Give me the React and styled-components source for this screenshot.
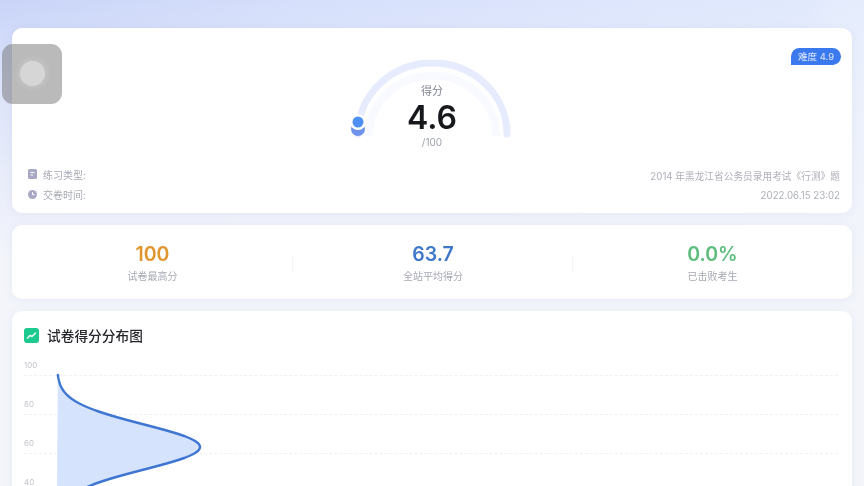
import React from "react";
import styled, { createGlobalStyle } from "styled-components";

const Global = createGlobalStyle`
  html, body { margin: 0; padding: 0; height: 486px; overflow: hidden; background: #f3f5fa; }
  #root { height: 486px; overflow: hidden; }
  * { box-sizing: border-box; }
`;

const Page = styled.div`
  position: relative;
  height: 486px;
  overflow: hidden;
  padding: 28px 12px 0;
  display: flex;
  flex-direction: column;
  gap: 12px;
  font-family: Inter, "Noto Sans CJK SC", sans-serif;
  filter: blur(0.4px);
  background:
    linear-gradient(180deg, rgba(243,245,251,0) 0, rgba(243,245,251,0.5) 100px, #f3f5fb 260px),
    linear-gradient(110deg, rgba(255,255,255,0) 78%, rgba(255,255,255,0.12) 80%, rgba(255,255,255,0.12) 100%),
    linear-gradient(100deg, #c9d4f8 0, #d5dffb 30%, #dde6fc 65%, #e3ebfd 100%);
`;

const Card = styled.section`
  background: #fff;
  border-radius: 10px;
  flex: none;
  box-shadow: 0 1px 10px rgba(110, 120, 160, 0.08);
`;

const ScoreCard = styled(Card)`
  position: relative;
  height: 185px;
  padding: 28px 12px 9px 16px;
  display: flex;
  flex-direction: column;
  justify-content: space-between;
`;

const Badge = styled.span`
  position: absolute;
  top: 20px;
  right: 11px;
  width: 50px;
  height: 17px;
  border-radius: 9px 9px 9px 0;
  background: #3b79ee;
  color: #dfe9fb;
  font-size: 9.5px;
  line-height: 18px;
  text-align: center;
`;

const Gauge = styled.div`
  position: relative;
  align-self: center;
  width: 170px;
  height: 100px;
  margin-left: -4px;
`;

const GaugeText = styled.div`
  position: absolute;
  inset: 27px 0 0 0;
  display: flex;
  flex-direction: column;
  align-items: center;
`;

const GaugeLabel = styled.span`
  font-size: 11px;
  line-height: 16px;
  color: #80838f;
`;

const GaugeValue = styled.span`
  font-size: 32px;
  line-height: 36px;
  margin-top: 1px;
  font-weight: 600;
  color: #17181c;
`;

const GaugeTotal = styled.span`
  font-size: 10px;
  line-height: 14px;
  margin-top: -1px;
  color: #a0a3ad;
`;

const Meta = styled.div`
  display: flex;
  flex-direction: column;
`;

const MetaRow = styled.div`
  height: 20px;
  display: flex;
  align-items: center;
  justify-content: space-between;
`;

const MetaLabel = styled.span`
  display: flex;
  align-items: center;
  gap: 6px;
  font-size: 10px;
  color: #a9abb5;
`;

const MetaValue = styled.span`
  margin-top: 3px;
  font-size: 9.7px;
  color: #aeb0b9;
`;

const StatsCard = styled(Card)`
  height: 74px;
  padding-top: 1px;
  display: grid;
  grid-template-columns: 281px 280px 279px;
  align-items: center;
`;

const Stat = styled.div`
  position: relative;
  display: flex;
  flex-direction: column;
  align-items: center;
  gap: 2.5px;
  ${p => p.$divider && `
    &::after {
      content: "";
      position: absolute;
      right: 0;
      top: 15px;
      height: 16px;
      width: 1px;
      background: #f4f5f7;
    }
  `}
`;

const StatValue = styled.span`
  font-size: 19.5px;
  line-height: 26px;
  font-weight: 600;
  color: ${p => p.$color};
`;

const StatLabel = styled.span`
  font-size: 10px;
  line-height: 15px;
  color: #a6a8b2;
`;

const ChartCard = styled(Card)`
  flex: 1 0 auto;
  height: 300px;
  padding: 15px 14px 0 12px;
`;

const ChartTitle = styled.h2`
  margin: 0;
  height: 18px;
  display: flex;
  align-items: center;
  gap: 8px;
  font-size: 13.7px;
  font-weight: 500;
  color: #25262b;
`;

const Plot = styled.div`
  position: relative;
  margin-top: 17px;
`;

const GridRow = styled.div`
  height: 39.1px;
  display: flex;
  flex-direction: column;
  font-size: 8px;
  line-height: 8px;
  color: #c2c4ca;
`;

const GridLine = styled.div`
  margin-top: 6px;
  border-top: 1px dashed #f0f1f4;
`;

const Curve = styled.svg`
  position: absolute;
  left: 0;
  top: 0;
  overflow: visible;
`;

const Assistive = styled.div`
  position: absolute;
  left: 2px;
  top: 44px;
  width: 60px;
  height: 60px;
  border-radius: 11px;
  background: rgba(110, 110, 110, 0.48);
  display: flex;
  align-items: center;
  justify-content: center;
`;

const AssistiveDot = styled.div`
  width: 25px;
  height: 25px;
  margin-top: -1px;
  border-radius: 50%;
  background: #d6d6d6;
  box-shadow: 0 0 4px 3px rgba(215, 215, 215, 0.3);
`;

const DocIcon = () => (
  <svg width="9" height="10" viewBox="0 0 9 10">
    <rect width="9" height="10" rx="1.5" fill="#a9a8c4" />
    <path d="M2.5 3.5h4M2.5 6h2.5" stroke="#fff" strokeWidth="1" />
  </svg>
);

const ClockIcon = () => (
  <svg width="9" height="9" viewBox="0 0 9 9">
    <circle cx="4.5" cy="4.5" r="4.5" fill="#a9a8c4" />
    <path d="M4.5 2.2v2.5h2" stroke="#fff" strokeWidth="1" fill="none" />
  </svg>
);

const TrendIcon = () => (
  <svg width="15" height="15" viewBox="0 0 15 15">
    <rect width="15" height="15" rx="3" fill="#1cc98e" />
    <path d="M3.5 10l2.5-2.5 2 1L11.5 5" stroke="#e8fbf4" strokeWidth="1.6" fill="none" strokeLinecap="round" strokeLinejoin="round" />
  </svg>
);

const stats = [
  { value: "100", label: "试卷最高分", color: "#e0952f", divider: true },
  { value: "63.7", label: "全站平均得分", color: "#3f78c9", divider: true },
  { value: "0.0%", label: "已击败考生", color: "#5dbd7c" },
];

const CURVE = Array.from({ length: 117 }, (_, y) => {
  const x = 33 + 143 * Math.exp(-((y - 72) ** 2) / (2 * 22.6 ** 2));
  return `${y === 0 ? "M" : "L"}${x.toFixed(2)} ${y}`;
}).join(" ");

export default function App() {
  return (
    <Page>
      <Global />
      <ScoreCard>
        <Badge>难度 4.9</Badge>
        <Gauge>
          <svg width="170" height="100" viewBox="0 0 170 100">
            <path d="M22 80 A63 60 0 0 1 149 80" fill="none" stroke="#f9faff" strokeWidth="8" />
            <path d="M11 78 A74.5 71 0 0 1 160 78" fill="none" stroke="#e6ebfd" strokeWidth="7" strokeLinecap="round" />
            <circle cx="11" cy="73" r="7" fill="#6f93ec" />
            <circle cx="11" cy="66" r="8" fill="#fff" />
            <circle cx="11" cy="66" r="5.5" fill="#4e8ff6" />
          </svg>
          <GaugeText>
            <GaugeLabel>得分</GaugeLabel>
            <GaugeValue>4.6</GaugeValue>
            <GaugeTotal>/100</GaugeTotal>
          </GaugeText>
        </Gauge>
        <Meta>
          <MetaRow>
            <MetaLabel><DocIcon />练习类型:</MetaLabel>
            <MetaValue>2014 年黑龙江省公务员录用考试《行测》题</MetaValue>
          </MetaRow>
          <MetaRow>
            <MetaLabel><ClockIcon />交卷时间:</MetaLabel>
            <MetaValue>2022.06.15 23:02</MetaValue>
          </MetaRow>
        </Meta>
      </ScoreCard>

      <StatsCard>
        {stats.map(s => (
          <Stat key={s.label} $divider={s.divider}>
            <StatValue $color={s.color}>{s.value}</StatValue>
            <StatLabel>{s.label}</StatLabel>
          </Stat>
        ))}
      </StatsCard>

      <ChartCard>
        <ChartTitle><TrendIcon />试卷得分分布图</ChartTitle>
        <Plot>
          {["100", "80", "60", "40"].map(t => (
            <GridRow key={t}>
              {t}
              <GridLine />
            </GridRow>
          ))}
          <Curve width="190" height="120" viewBox="0 0 190 120">
            <g transform="translate(0 14)">
              <path d={`${CURVE} L33 116 Z`} fill="#d5e3fc" />
              <path d={CURVE} fill="none" stroke="#3f76d2" strokeWidth="2.4" strokeLinecap="round" />
            </g>
          </Curve>
        </Plot>
      </ChartCard>

      <Assistive>
        <AssistiveDot />
      </Assistive>
    </Page>
  );
}
